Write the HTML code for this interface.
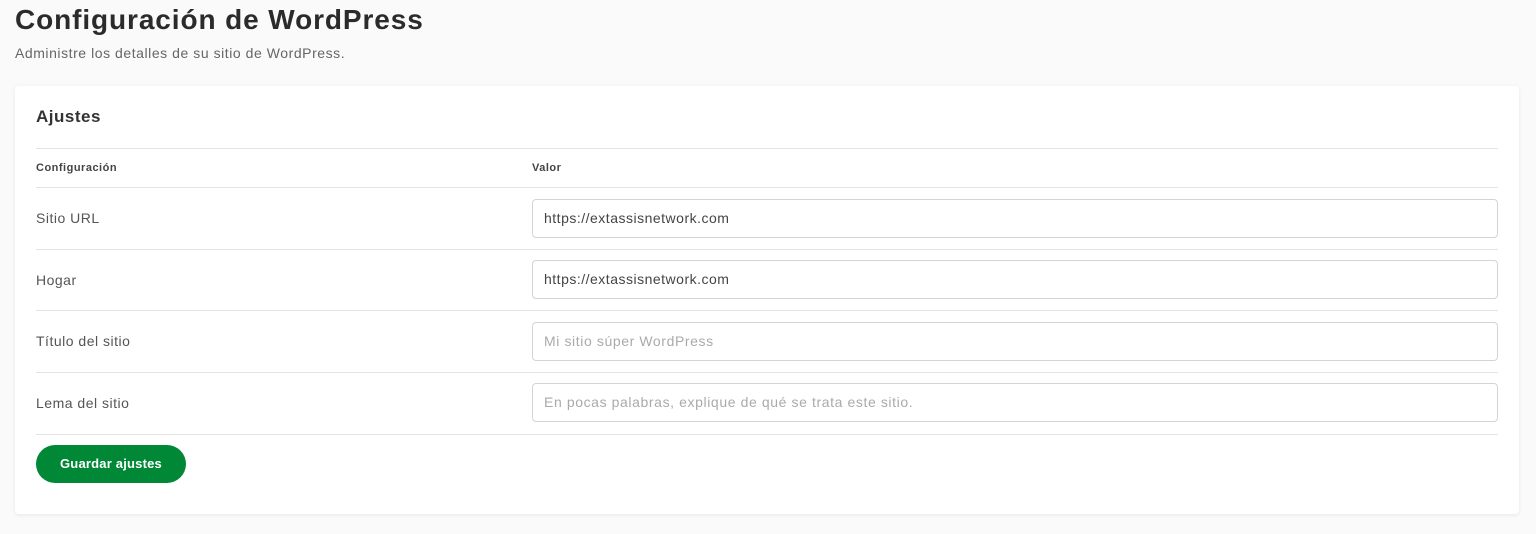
<!DOCTYPE html>
<html><head><meta charset="utf-8"><style>
*{box-sizing:border-box;margin:0;padding:0}
body{width:1536px;height:534px;background:#fafafa;font-family:"Liberation Sans",sans-serif;color:#333;position:relative;overflow:hidden;letter-spacing:0.5px}
.abs{position:absolute}
h1{position:absolute;left:15px;top:4px;font-size:28px;font-weight:600;color:#2b2b2b;letter-spacing:0.9px}
.sub{left:15px;top:45px;font-size:14px;color:#666;letter-spacing:0.55px}
.card{left:15px;top:86px;width:1504px;height:428px;background:#fff;border-radius:4px;box-shadow:0 1px 4px rgba(0,0,0,.08)}
.line{left:36px;width:1462px;height:1px;background:#e3e3e3}
.lbl{left:36px;font-size:14px;color:#555}
.inp{left:532px;width:966px;height:39px;border:1px solid #d4d4d4;border-radius:4px;font-size:14px;padding:10px 11px;color:#444}
.ph{color:#aaa;letter-spacing:0.6px}
.btn{left:36px;top:445px;width:150px;height:38px;border-radius:19px;background:#008836;color:#fff;font-size:13px;font-weight:bold;text-align:center;line-height:38px;letter-spacing:0.2px}
</style></head><body>
<h1>Configuración de WordPress</h1>
<div class="abs sub">Administre los detalles de su sitio de WordPress.</div>
<div class="abs card"></div>
<div class="abs" style="left:36px;top:107px;font-size:17px;font-weight:bold;color:#333">Ajustes</div>
<div class="abs line" style="top:148px"></div>
<div class="abs" style="left:36px;top:162px;font-size:11px;font-weight:bold;color:#444">Configuración</div>
<div class="abs" style="left:532px;top:162px;font-size:11px;font-weight:bold;color:#444">Valor</div>
<div class="abs line" style="top:187px"></div>
<div class="abs lbl" style="top:210px">Sitio URL</div>
<div class="abs inp" style="top:199px">https://extassisnetwork.com</div>
<div class="abs line" style="top:249px"></div>
<div class="abs lbl" style="top:272px">Hogar</div>
<div class="abs inp" style="top:260px">https://extassisnetwork.com</div>
<div class="abs line" style="top:310px"></div>
<div class="abs lbl" style="top:333px">Título del sitio</div>
<div class="abs inp ph" style="top:322px">Mi sitio súper WordPress</div>
<div class="abs line" style="top:372px"></div>
<div class="abs lbl" style="top:395px">Lema del sitio</div>
<div class="abs inp ph" style="top:383px">En pocas palabras, explique de qué se trata este sitio.</div>
<div class="abs line" style="top:434px"></div>
<div class="abs btn">Guardar ajustes</div>
</body></html>
